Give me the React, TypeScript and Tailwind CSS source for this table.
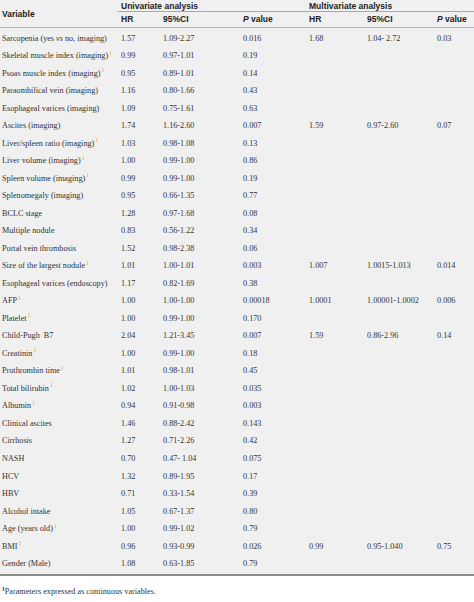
import React from "react";

// Cox regression table — univariate / multivariate columns

type Row = {
  name: React.ReactNode;
  sup?: boolean;
  hr: string;
  ci: string;
  p: string;
  mhr?: string;
  mci?: string;
  mp?: string;
};

const rows: Row[] = [
  { name: <>Sarcopenia (yes <i>vs</i> no, imaging)</>, hr: "1.57", ci: "1.09-2.27", p: "0.016", mhr: "1.68", mci: "1.04- 2.72", mp: "0.03" },
  { name: "Skeletal muscle index (imaging)", sup: true, hr: "0.99", ci: "0.97-1.01", p: "0.19" },
  { name: "Psoas muscle index (imaging)", sup: true, hr: "0.95", ci: "0.89-1.01", p: "0.14" },
  { name: "Paraombilical vein (imaging)", hr: "1.16", ci: "0.80-1.66", p: "0.43" },
  { name: "Esophageal varices (imaging)", hr: "1.09", ci: "0.75-1.61", p: "0.63" },
  { name: "Ascites (imaging)", hr: "1.74", ci: "1.16-2.60", p: "0.007", mhr: "1.59", mci: "0.97-2.60", mp: "0.07" },
  { name: "Liver/spleen ratio (imaging)", sup: true, hr: "1.03", ci: "0.98-1.08", p: "0.13" },
  { name: "Liver volume (imaging)", sup: true, hr: "1.00", ci: "0.99-1.00", p: "0.86" },
  { name: "Spleen volume (imaging)", sup: true, hr: "0.99", ci: "0.99-1.00", p: "0.19" },
  { name: "Splenomegaly (imaging)", hr: "0.95", ci: "0.66-1.35", p: "0.77" },
  { name: "BCLC stage", hr: "1.28", ci: "0.97-1.68", p: "0.08" },
  { name: "Multiple nodule", hr: "0.83", ci: "0.56-1.22", p: "0.34" },
  { name: "Portal vein thrombosis", hr: "1.52", ci: "0.98-2.38", p: "0.06" },
  { name: "Size of the largest nodule", sup: true, hr: "1.01", ci: "1.00-1.01", p: "0.003", mhr: "1.007", mci: "1.0015-1.013", mp: "0.014" },
  { name: "Esophageal varices (endoscopy)", hr: "1.17", ci: "0.82-1.69", p: "0.38" },
  { name: "AFP", sup: true, hr: "1.00", ci: "1.00-1.00", p: "0.00018", mhr: "1.0001", mci: "1.00001-1.0002", mp: "0.006" },
  { name: "Platelet", sup: true, hr: "1.00", ci: "0.99-1.00", p: "0.170" },
  { name: "Child-Pugh\u00a0 B7", hr: "2.04", ci: "1.21-3.45", p: "0.007", mhr: "1.59", mci: "0.86-2.96", mp: "0.14" },
  { name: "Creatinin", sup: true, hr: "1.00", ci: "0.99-1.00", p: "0.18" },
  { name: "Prothrombin time", sup: true, hr: "1.01", ci: "0.98-1.01", p: "0.45" },
  { name: "Total bilirubin", sup: true, hr: "1.02", ci: "1.00-1.03", p: "0.035" },
  { name: "Albumin", sup: true, hr: "0.94", ci: "0.91-0.98", p: "0.003" },
  { name: "Clinical ascites", hr: "1.46", ci: "0.88-2.42", p: "0.143" },
  { name: "Cirrhosis", hr: "1.27", ci: "0.71-2.26", p: "0.42" },
  { name: "NASH", hr: "0.70", ci: "0.47- 1.04", p: "0.075" },
  { name: "HCV", hr: "1.32", ci: "0.89-1.95", p: "0.17" },
  { name: "HBV", hr: "0.71", ci: "0.33-1.54", p: "0.39" },
  { name: "Alcohol intake", hr: "1.05", ci: "0.67-1.37", p: "0.80" },
  { name: "Age (years old)", sup: true, hr: "1.00", ci: "0.99-1.02", p: "0.79" },
  { name: "BMI", sup: true, hr: "0.96", ci: "0.93-0.99", p: "0.026", mhr: "0.99", mci: "0.95-1.040", mp: "0.75" },
  { name: "Gender (Male)", hr: "1.08", ci: "0.63-1.85", p: "0.79" },
];

const cols = "grid grid-cols-[118px_42px_80px_66px_58px_70px_60px]";
const serif = "font-['Liberation_Serif',serif]";
const sans = "font-['Liberation_Sans',Arial,sans-serif]";

export default function App() {
  return (
    <div className="w-[474px] h-[602px] overflow-hidden bg-white">
      <div className="w-[494px] bg-[#f0f0f0] border-b-2 border-[#8a8a8a] pb-[1.5px]">
        {/* header */}
        <div className={`${cols} grid-rows-[12px_15px] ${sans} text-[8.5px] font-bold text-[#222] border-b border-[#b5b5b5]`}>
          <div className="row-span-2 flex items-center pl-[2px] pt-[1px]">Variable</div>
          <div className="col-span-3 flex items-center pl-[3px] leading-[10px] border-b border-[#a8a8a8]">Univariate analysis</div>
          <div className="col-span-3 flex items-center pl-[3px] leading-[10px] border-b border-[#a8a8a8]">Multivariate analysis</div>
          <div className="flex items-center pl-[3px]">HR</div>
          <div className="flex items-center pl-[3px]">95%CI</div>
          <div className="flex items-center pl-[3px]"><i>P</i>&nbsp;value</div>
          <div className="flex items-center pl-[3px]">HR</div>
          <div className="flex items-center pl-[3px]">95%CI</div>
          <div className="flex items-center pl-[3px]"><i>P</i>&nbsp;value</div>
        </div>

        {/* body */}
        <div className={`pt-[2px] ${serif} text-[8.2px] text-[#333]`}>
          {rows.map((r, i) => (
            <div key={i} className={`${cols} h-[17.53px] items-center whitespace-nowrap`}>
              <div className="pl-[2px]">
                {r.name}
                {r.sup && <sup className="text-[5.5px] text-[#e39a3b] ml-[1px] relative -top-[3.5px]">1</sup>}
              </div>
              <div className="pl-[3px]">{r.hr}</div>
              <div className="pl-[3px]">{r.ci}</div>
              <div className="pl-[3px]">{r.p}</div>
              <div className="pl-[3px]">{r.mhr}</div>
              <div className="pl-[3px]">{r.mci}</div>
              <div className="pl-[3px]">{r.mp}</div>
            </div>
          ))}
        </div>
      </div>

      <p className={`pt-[10px] pl-[2px] leading-[12px] ${serif} text-[8.2px] text-[#333]`}>
        <sup className="text-[5.5px] font-bold text-[#222] relative -top-[3.5px]">1</sup>
        Parameters expressed as continuous variables.
      </p>
    </div>
  );
}
